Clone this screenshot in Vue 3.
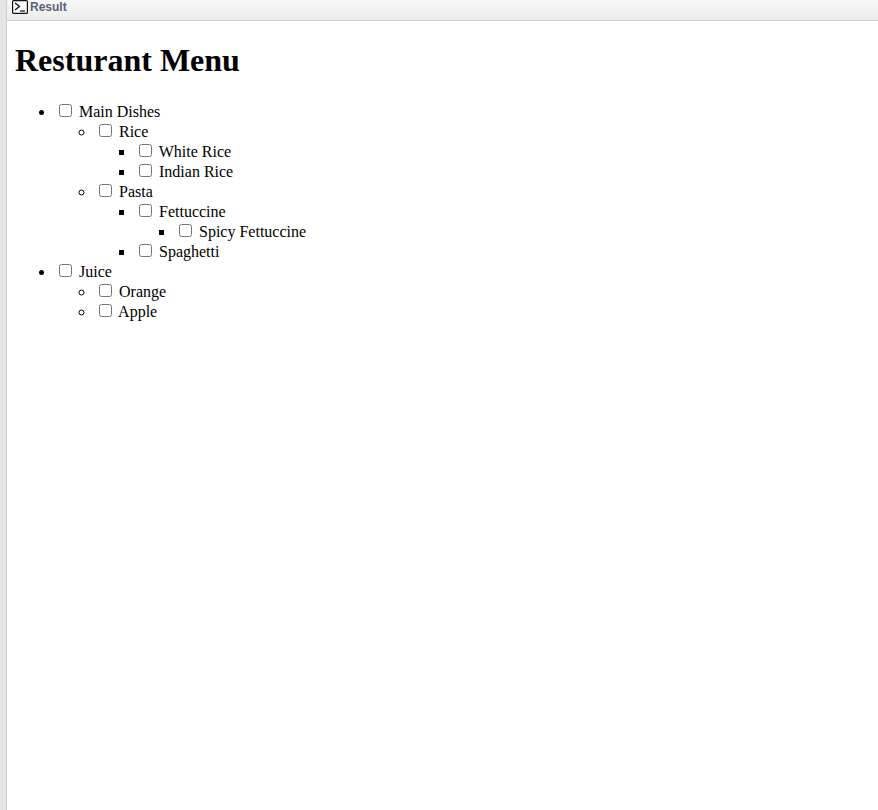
<script setup>
const menu = [
  {
    name: 'Main Dishes',
    children: [
      {
        name: 'Rice',
        children: [
          { name: 'White Rice', children: [] },
          { name: 'Indian Rice', children: [] }
        ]
      },
      {
        name: 'Pasta',
        children: [
          { name: 'Fettuccine', children: [{ name: 'Spicy Fettuccine', children: [] }] },
          { name: 'Spaghetti', children: [] }
        ]
      }
    ]
  },
  {
    name: 'Juice',
    children: [
      { name: 'Orange', children: [] },
      { name: 'Apple', children: [] }
    ]
  }
]
</script>

<template>
  <div class="page">
    <div class="rail"></div>
    <div class="panel">
      <div class="result-bar">
        <svg class="result-icon" width="16" height="14" viewBox="0 0 16 14">
          <rect x="0.6" y="0.6" width="14.8" height="12.8" rx="1" fill="#fff" stroke="#111" stroke-width="1.2" />
          <path d="M3 3 L7.5 6.5 L3 10" fill="none" stroke="#111" stroke-width="1.3" />
          <path d="M8 11 H13" fill="none" stroke="#111" stroke-width="1.2" />
        </svg>
        <span class="result-label">Result</span>
      </div>
      <div class="content">
        <h1>Resturant Menu</h1>
        <ul class="l1">
          <li v-for="a in menu" :key="a.name">
            <input type="checkbox"> {{ a.name }}
            <ul class="l2">
              <li v-for="b in a.children" :key="b.name">
                <input type="checkbox"> {{ b.name }}
                <ul v-if="b.children.length" class="l3">
                  <li v-for="c in b.children" :key="c.name">
                    <input type="checkbox"> {{ c.name }}
                    <ul v-if="c.children.length" class="l3">
                      <li v-for="d in c.children" :key="d.name">
                        <input type="checkbox"> {{ d.name }}
                      </li>
                    </ul>
                  </li>
                </ul>
              </li>
            </ul>
          </li>
        </ul>
      </div>
    </div>
  </div>
</template>

<style scoped>
.page {
  display: flex;
  height: 810px;
  background: #fff;
  overflow: hidden;
}

.rail {
  width: 7px;
  flex: none;
  background: #e6e6e6;
  border-right: 1px solid #cfcfcf;
  box-sizing: border-box;
}

.panel {
  flex: 1;
  min-width: 0;
}

.result-bar {
  height: 21px;
  box-sizing: border-box;
  display: flex;
  align-items: flex-start;
  padding-left: 5px;
  gap: 2px;
  background: linear-gradient(#f8f8f8, #ececec);
  border-bottom: 1px solid #d0d0d0;
}

.result-label {
  font-family: "Liberation Sans", Arial, sans-serif;
  font-size: 12px;
  font-weight: bold;
  line-height: 14px;
  color: #5a6473;
}

.content {
  padding: 0 8px;
  font-family: "Liberation Serif", "Times New Roman", serif;
  font-size: 16px;
  color: #000;
}

h1 {
  font-size: 32px;
  font-weight: bold;
  margin: 21px 0 23px;
  line-height: 37px;
}

ul {
  margin: 0;
  padding-left: 40px;
}

.l1 {
  list-style: disc;
  margin: 16px 0;
}

.l2 {
  list-style: circle;
}

.l3 {
  list-style: square;
}

li {
  line-height: 20px;
}

input[type="checkbox"] {
  margin: 0 3px 4px 4px;
}
</style>

<style>
html,
body {
  margin: 0;
  background: #fff;
}
</style>
